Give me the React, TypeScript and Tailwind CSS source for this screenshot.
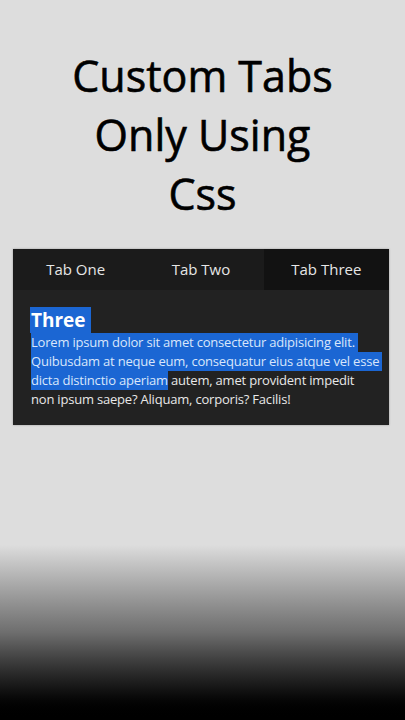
import React, { useState } from 'react';

const tabs = ['Tab One', 'Tab Two', 'Tab Three'];

const font = { fontFamily: '"Open Sans", "Noto Sans", sans-serif' };

const App: React.FC = () => {
  const [active, setActive] = useState(2);

  return (
    <div className="w-[405px] h-[720px] flex flex-col bg-[#dddddd] overflow-hidden" style={font}>
      <h1 className="pt-[46px] text-center text-[43px] leading-[59px] text-black font-normal [-webkit-text-stroke:0.6px_black]">
        Custom Tabs
        <br />
        Only Using
        <br />
        Css
      </h1>

      <div className="w-[376px] ml-[13px] mt-[26px] bg-[#222222] shadow-[0_0_2px_rgba(0,0,0,0.3)]">
        <div className="grid grid-cols-3 h-[41px] bg-[#1b1b1b]">
          {tabs.map((t, i) => (
            <button
              key={t}
              onClick={() => setActive(i)}
              className={`text-[15px] text-[#e6e6e6] ${active === i ? 'bg-[#121212]' : ''}`}
            >
              {t}
            </button>
          ))}
        </div>

        <div className="px-[18px] pt-[17px] pb-[16px] text-[13px] leading-[19px] tracking-[-0.2px] whitespace-nowrap">
          <h2 className="text-[19px] leading-[26px] font-bold text-white tracking-normal">
            <span className="inline-block bg-[#1b66d3] pr-[5px] pl-px -ml-px">Three</span>
          </h2>
          <div className="text-[#e8e8e8]">
            <div>
              <span className="bg-[#1b66d3] text-[#d9e6fb] inline-block pr-[3px]">
                Lorem ipsum dolor sit amet consectetur adipisicing elit.
              </span>
            </div>
            <div>
              <span className="bg-[#1b66d3] text-[#d9e6fb] inline-block pr-[3px]">
                Quibusdam at neque eum, consequatur eius atque vel esse
              </span>
            </div>
            <div>
              <span className="bg-[#1b66d3] text-[#d9e6fb] inline-block">dicta distinctio aperiam</span> autem, amet
              provident impedit
            </div>
            <div>non ipsum saepe? Aliquam, corporis? Facilis!</div>
          </div>
        </div>
      </div>

      <div className="flex-1" />
      <div className="h-[175px] bg-gradient-to-b from-[#dddddd] via-[#6e6e6e] to-black" />
    </div>
  );
};

export default App;
